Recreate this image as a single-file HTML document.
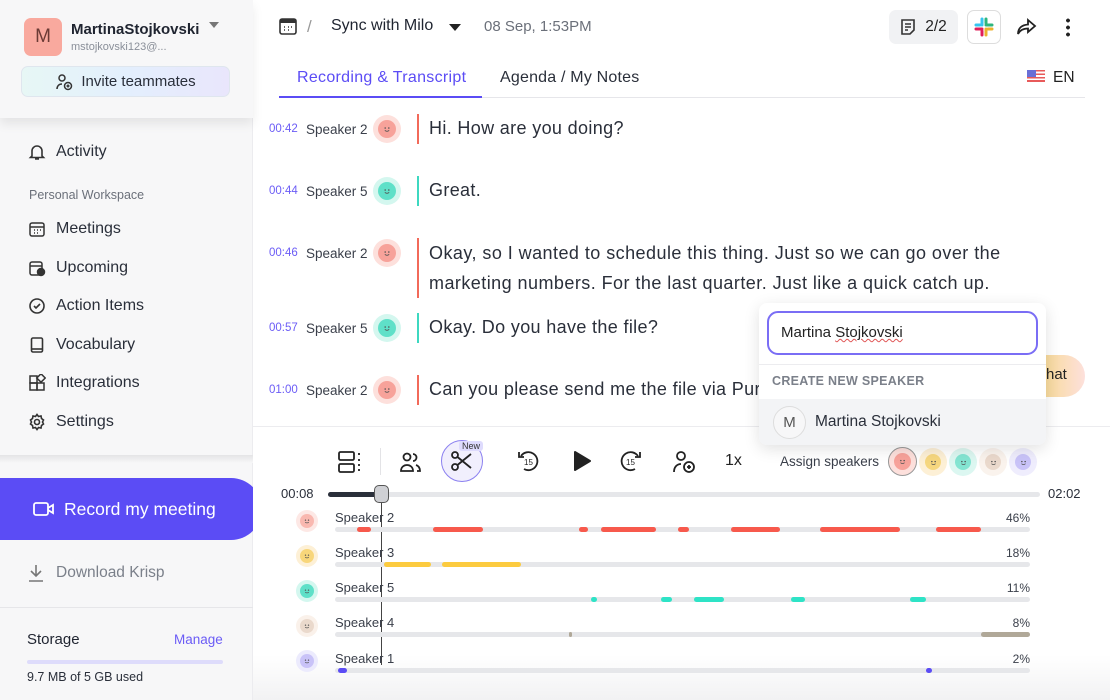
<!DOCTYPE html>
<html><head><meta charset="utf-8"><style>
*{box-sizing:border-box;margin:0;padding:0}
body{width:1110px;height:700px;overflow:hidden;font-family:"Liberation Sans",sans-serif;background:#fff;position:relative;color:#1f2430}
.a{position:absolute}
.side{left:0;top:0;width:253px;height:700px;background:#f7f7f8;border-right:1px solid #ececef}
.nav{position:absolute;left:28px;font-size:16px;color:#2a2f3a;display:flex;align-items:center;gap:10px}
.nav svg{width:18px;height:18px}
.tr{position:absolute;display:flex;align-items:center;height:30px}
.ts{font-size:11.5px;color:#6b5cf6;width:37px}
.sp{font-size:13.5px;color:#3a3f4a;width:67px}
.face{width:28px;height:28px;border-radius:50%;display:flex;align-items:center;justify-content:center}
.face span{width:18px;height:18px;border-radius:50%;display:flex;align-items:center;justify-content:center}
.txt{font-size:18px;color:#2a2f3a;letter-spacing:.35px}
.bar{position:absolute;left:335px;width:695px;height:5px;border-radius:3px;background:#e6e7ea}
.seg{position:absolute;height:5px;border-radius:3px;top:0}
.lab{position:absolute;left:335px;font-size:13px;color:#3a3f4a}
.pct{position:absolute;right:80px;font-size:12px;color:#3a3f4a}
.sf{position:absolute;left:296px;width:22px;height:22px;border-radius:50%;display:flex;align-items:center;justify-content:center}
.vl{position:absolute;left:417px;width:1.5px}
</style></head><body>
<svg width="0" height="0" style="position:absolute"><defs><symbol id="sm" viewBox="0 0 12 12"><circle cx="4.2" cy="5" r=".8" fill="#555"/><circle cx="7.8" cy="5" r=".8" fill="#555"/><path d="M3.8 7.3q2.2 2 4.4 0" fill="none" stroke="#555" stroke-width=".8"/></symbol></defs></svg>
<div class="a side"></div>
<div class="a" style="left:0;top:0;width:253px;height:118px;background:#f7f7f8;box-shadow:0 6px 10px rgba(0,0,0,.08)"></div>
<div class="a" style="left:24px;top:18px;width:38px;height:38px;border-radius:7px;background:#f9a99e;color:#6b3a35;font-size:19px;display:flex;align-items:center;justify-content:center">M</div>
<div class="a" style="left:71px;top:21px;font-size:15px;font-weight:bold;color:#1f2430">MartinaStojkovski</div>
<div class="a" style="left:71px;top:41px;font-size:11px;color:#8a8f99">mstojkovski123@...</div>
<div class="a" style="left:209px;top:22px;width:0;height:0;border-left:5px solid transparent;border-right:5px solid transparent;border-top:6px solid #777"></div>
<div class="a" style="left:21px;top:66px;width:209px;height:31px;border-radius:7px;background:linear-gradient(90deg,#e7f7f5,#e3effd,#e9e6fc);border:1px solid #dfe6ee;display:flex;align-items:center;justify-content:center;gap:8px;font-size:15px;color:#2a2f3a"><svg width="18" height="18" viewBox="0 0 18 18" fill="none" stroke="#333" stroke-width="1.5"><circle cx="7" cy="5" r="3"/><path d="M2 16c0-3 2-5 5-5"/><circle cx="13" cy="13" r="3.5"/><path d="M13 11.5v3M11.5 13h3"/></svg>Invite teammates</div>

<div class="nav" style="top:143px"><svg viewBox="0 0 18 18" fill="none" stroke="#333" stroke-width="1.6"><path d="M4 13V8a5 5 0 0110 0v5l1.5 1.5h-13zM7 16h4"/></svg>Activity</div>
<div class="a" style="left:29px;top:188px;font-size:12.5px;color:#6b707a">Personal Workspace</div>
<div class="nav" style="top:220px"><svg viewBox="0 0 18 18" fill="none" stroke="#333" stroke-width="1.5"><rect x="2" y="3" width="14" height="13" rx="2"/><path d="M2 7h14M6 10h1M9 10h1M12 10h1M6 13h1M9 13h1"/></svg>Meetings</div>
<div class="nav" style="top:259px"><svg viewBox="0 0 18 18" fill="none" stroke="#333" stroke-width="1.5"><rect x="2" y="3" width="12" height="13" rx="2"/><path d="M2 7h12"/><circle cx="13" cy="13" r="3.5" fill="#333"/></svg>Upcoming</div>
<div class="nav" style="top:297px"><svg viewBox="0 0 18 18" fill="none" stroke="#333" stroke-width="1.6"><circle cx="9" cy="9" r="7"/><path d="M6 9l2 2 4-4"/></svg>Action Items</div>
<div class="nav" style="top:336px"><svg viewBox="0 0 18 18" fill="none" stroke="#333" stroke-width="1.6"><rect x="3.5" y="2" width="11" height="14" rx="1.5"/><path d="M3.5 13h11"/></svg>Vocabulary</div>
<div class="nav" style="top:374px"><svg viewBox="0 0 18 18" fill="none" stroke="#333" stroke-width="1.5"><rect x="2" y="9" width="7" height="7"/><rect x="9" y="9" width="7" height="7"/><rect x="2" y="2" width="7" height="7"/><rect x="10" y="1" width="6" height="6" transform="rotate(45 13 4)"/></svg>Integrations</div>
<div class="nav" style="top:413px"><svg viewBox="0 0 18 18" fill="none" stroke="#333" stroke-width="1.6"><circle cx="9" cy="9" r="2.5"/><path d="M9 1.5l1.5 2 2.5-.5.5 2.5 2 1.5-1 2 1 2-2 1.5-.5 2.5-2.5-.5L9 16.5l-1.5-2-2.5.5-.5-2.5-2-1.5 1-2-1-2 2-1.5.5-2.5 2.5.5z"/></svg>Settings</div>
<div class="a" style="left:0;top:455px;width:253px;height:8px;background:linear-gradient(#e4e4e6,#f7f7f8)"></div>
<div class="a" style="left:0;top:478px;width:262px;height:62px;border-radius:0 31px 31px 0;background:#5b4cf5;color:#fff;font-size:17.5px;display:flex;align-items:center;padding-left:33px;gap:9px"><svg width="22" height="16" viewBox="0 0 22 16" fill="none" stroke="#fff" stroke-width="1.8"><rect x="1" y="2" width="14" height="12" rx="2"/><path d="M15 7l5-3v8l-5-3"/></svg>Record my meeting</div>
<div class="a" style="left:28px;top:564px;font-size:15.5px;color:#7b808a;display:flex;gap:12px;align-items:center"><svg width="16" height="18" viewBox="0 0 16 18" fill="none" stroke="#777" stroke-width="1.6"><path d="M8 1v11M3 7l5 5 5-5M1 17h14"/></svg>Download Krisp</div>
<div class="a" style="left:0;top:607px;width:253px;height:1px;background:#e6e6e9"></div>
<div class="a" style="left:27px;top:631px;font-size:15px;color:#1f2430">Storage</div>
<div class="a" style="left:174px;top:632px;font-size:13.5px;color:#6b5cf6">Manage</div>
<div class="a" style="left:27px;top:660px;width:196px;height:4px;border-radius:2px;background:#dedcfb"></div>
<div class="a" style="left:27px;top:670px;font-size:12.5px;color:#2a2f3a">9.7 MB of 5 GB used</div>

<!-- header -->
<svg class="a" style="left:279px;top:18px" width="18" height="17" viewBox="0 0 18 17"><rect x="1" y="1" width="16" height="15" rx="2" fill="none" stroke="#333" stroke-width="1.6"/><rect x="1" y="1" width="16" height="4" fill="#333"/><path d="M5 9h1M9 9h1M12 9h1M5 12h1M9 12h1" stroke="#333" stroke-width="1.6"/></svg>
<div class="a" style="left:307px;top:17px;font-size:17px;color:#999">/</div>
<div class="a" style="left:331px;top:17px;font-size:16px;color:#1f2430">Sync with Milo</div>
<div class="a" style="left:449px;top:24px;border-left:6px solid transparent;border-right:6px solid transparent;border-top:7px solid #222"></div>
<div class="a" style="left:484px;top:18px;font-size:15px;color:#6b707a">08 Sep, 1:53PM</div>
<div class="a" style="left:889px;top:10px;width:69px;height:34px;border-radius:7px;background:#f1f2f4;display:flex;align-items:center;justify-content:center;gap:9px;font-size:15.5px;color:#222"><svg width="16" height="18" viewBox="0 0 16 18" fill="none" stroke="#333" stroke-width="1.6"><path d="M2 2h12v10l-4 4H2z M5 6h6M5 9h6M5 12h3"/></svg>2/2</div>
<div class="a" style="left:967px;top:10px;width:34px;height:34px;border-radius:7px;border:1px solid #ddd;background:#fff"></div>
<svg class="a" style="left:974px;top:17px" width="20" height="20" viewBox="0 0 20 20" stroke-linecap="round" stroke-width="3"><path d="M8 2v6" stroke="#36c5f0"/><path d="M18 8h-6" stroke="#2eb67d"/><path d="M12 18v-6" stroke="#ecb22e"/><path d="M2 12h6" stroke="#e01e5a"/><path d="M12 2v4" stroke="#2eb67d"/><path d="M18 12h-4" stroke="#ecb22e"/><path d="M8 18v-4" stroke="#e01e5a"/><path d="M2 8h4" stroke="#36c5f0"/></svg>
<svg class="a" style="left:1016px;top:18px" width="21" height="18" viewBox="0 0 21 18" fill="none" stroke="#222" stroke-width="1.8"><path d="M12 2l7 6-7 6v-3.5C7 10.5 4 12 2 16c0-6 4-9 10-9.5z"/></svg>
<div class="a" style="left:1066px;top:17px;width:4px;height:20px;background:radial-gradient(circle,#222 1.8px,transparent 2px) 0 0/4px 7px"></div>
<div class="a" style="left:297px;top:69px;font-size:16px;letter-spacing:.3px;color:#5b4cf5">Recording &amp; Transcript</div>
<div class="a" style="left:500px;top:69px;font-size:16px;letter-spacing:.2px;color:#2a2f3a">Agenda / My Notes</div>
<div class="a" style="left:1027px;top:70px;width:18px;height:12px;background:repeating-linear-gradient(#e85a5a 0 1.7px,#fff 1.7px 3.4px)"></div>
<div class="a" style="left:1027px;top:70px;width:9px;height:7px;background:#6a6fd6"></div>
<div class="a" style="left:1053px;top:69px;font-size:15.5px;color:#222">EN</div>
<div class="a" style="left:279px;top:97px;width:806px;height:1px;background:#e6e6ea"></div>
<div class="a" style="left:279px;top:96px;width:203px;height:2px;background:#5b4cf5"></div>

<!-- transcript -->
<div class="tr" style="left:269px;top:114px"><span class="ts">00:42</span><span class="sp">Speaker 2</span><span class="face" style="background:#fde0dc"><span style="background:#f7a29a"><svg width="12" height="12"><use href="#sm"/></svg></span></span></div>
<div class="vl" style="top:114px;height:30px;background:#f26a5a"></div>
<div class="a txt" style="left:429px;top:118px">Hi. How are you doing?</div>
<div class="tr" style="left:269px;top:176px"><span class="ts">00:44</span><span class="sp">Speaker 5</span><span class="face" style="background:#d4f7ef"><span style="background:#5fe0c8"><svg width="12" height="12"><use href="#sm"/></svg></span></span></div>
<div class="vl" style="top:176px;height:30px;background:#3dd8c0"></div>
<div class="a txt" style="left:429px;top:180px">Great.</div>
<div class="tr" style="left:269px;top:238px"><span class="ts">00:46</span><span class="sp">Speaker 2</span><span class="face" style="background:#fde0dc"><span style="background:#f7a29a"><svg width="12" height="12"><use href="#sm"/></svg></span></span></div>
<div class="vl" style="top:238px;height:60px;background:#f26a5a"></div>
<div class="a txt" style="left:429px;top:238px;line-height:30px;letter-spacing:.45px">Okay, so I wanted to schedule this thing. Just so we can go over the<br>marketing numbers. For the last quarter. Just like a quick catch up.</div>
<div class="tr" style="left:269px;top:313px"><span class="ts">00:57</span><span class="sp">Speaker 5</span><span class="face" style="background:#d4f7ef"><span style="background:#5fe0c8"><svg width="12" height="12"><use href="#sm"/></svg></span></span></div>
<div class="vl" style="top:313px;height:30px;background:#3dd8c0"></div>
<div class="a txt" style="left:429px;top:317px">Okay. Do you have the file?</div>
<div class="tr" style="left:269px;top:375px"><span class="ts">01:00</span><span class="sp">Speaker 2</span><span class="face" style="background:#fde0dc"><span style="background:#f7a29a"><svg width="12" height="12"><use href="#sm"/></svg></span></span></div>
<div class="vl" style="top:375px;height:30px;background:#f26a5a"></div>
<div class="a txt" style="left:429px;top:379px">Can you please send me the file via Pur</div>
<div class="a" style="left:1025px;top:355px;width:60px;height:42px;border-radius:21px;background:linear-gradient(90deg,#f6d87a,#fde0dc);font-size:15px;color:#222;padding:11px 0 0 21px">hat</div>

<!-- player area -->
<div class="a" style="left:253px;top:426px;width:857px;height:274px;background:#fff;border-top:1px solid #ececef"></div>
<div class="a" style="left:253px;top:655px;width:857px;height:45px;background:linear-gradient(rgba(255,255,255,0),#f2f2f3)"></div>
<svg class="a" style="left:338px;top:451px" width="24" height="22" viewBox="0 0 24 22" fill="none" stroke="#222" stroke-width="1.8"><rect x="1" y="1" width="15" height="8" rx="1.5"/><rect x="1" y="13" width="15" height="8" rx="1.5"/><path d="M21 2v2M21 8v2M21 13v2M21 18v2"/></svg>
<div class="a" style="left:380px;top:448px;width:1px;height:27px;background:#e3e3e6"></div>
<svg class="a" style="left:400px;top:451px" width="22" height="22" viewBox="0 0 22 22" fill="none" stroke="#222" stroke-width="1.8"><circle cx="7" cy="6" r="3.5"/><path d="M1 20c0-4 3-6 6-6s6 2 6 6z"/><path d="M13 3a3.5 3.5 0 010 7M16 14c3 1 4 3 4 6h-3"/></svg>
<div class="a" style="left:441px;top:440px;width:42px;height:42px;border-radius:50%;border:1.5px solid #8b80f0;background:#f1effd"></div>
<svg class="a" style="left:451px;top:451px" width="22" height="20" viewBox="0 0 22 20" fill="none" stroke="#222" stroke-width="1.8"><circle cx="4" cy="4" r="3"/><circle cx="4" cy="16" r="3"/><path d="M6.5 6L20 17M6.5 14L20 3"/></svg>
<div class="a" style="left:459px;top:441px;font-size:9px;background:#dedbfd;color:#333;padding:0 3px;border-radius:3px">New</div>
<svg class="a" style="left:517px;top:450px" width="22" height="22" viewBox="0 0 22 22" fill="none" stroke="#222" stroke-width="1.8"><path d="M4 6a9 9 0 113 13"/><path d="M2 2v5h5"/><text x="7" y="15" font-size="8" fill="#222" stroke="none" font-family="Liberation Sans">15</text></svg>
<svg class="a" style="left:572px;top:451px" width="20" height="20" viewBox="0 0 20 20"><path d="M3 1l15 9-15 9z" fill="#222" stroke="#222" stroke-linejoin="round" stroke-width="2"/></svg>
<svg class="a" style="left:620px;top:450px" width="22" height="22" viewBox="0 0 22 22" fill="none" stroke="#222" stroke-width="1.8"><path d="M18 6a9 9 0 10-3 13"/><path d="M20 2v5h-5"/><text x="6" y="15" font-size="8" fill="#222" stroke="none" font-family="Liberation Sans">15</text></svg>
<svg class="a" style="left:672px;top:450px" width="24" height="24" viewBox="0 0 24 24" fill="none" stroke="#222" stroke-width="1.8"><circle cx="9" cy="6" r="4"/><path d="M2 22c0-5 3-8 7-8"/><circle cx="17" cy="17" r="5"/><path d="M15 17h4M17 15v4"/></svg>
<div class="a" style="left:725px;top:452px;font-size:16px;color:#222">1x</div>
<div class="a" style="left:780px;top:454px;font-size:13.5px;color:#3a3f4a">Assign speakers</div>
<div class="a" style="left:888px;top:447px;width:29px;height:29px;border-radius:50%;border:1.5px solid #999;background:#fde0dc;display:flex;align-items:center;justify-content:center"><span style="width:17px;height:17px;border-radius:50%;background:#f7a29a;display:flex;align-items:center;justify-content:center"><svg width="11" height="11"><use href="#sm"/></svg></span></div>
<div class="a" style="left:919px;top:448px;width:28px;height:28px;border-radius:50%;background:#fdf0d6;display:flex;align-items:center;justify-content:center"><span style="width:16px;height:16px;border-radius:50%;background:#f6d77f;display:flex;align-items:center;justify-content:center"><svg width="11" height="11"><use href="#sm"/></svg></span></div>
<div class="a" style="left:949px;top:448px;width:28px;height:28px;border-radius:50%;background:#dcf7f1;display:flex;align-items:center;justify-content:center"><span style="width:16px;height:16px;border-radius:50%;background:#84e5d2;display:flex;align-items:center;justify-content:center"><svg width="11" height="11"><use href="#sm"/></svg></span></div>
<div class="a" style="left:979px;top:448px;width:28px;height:28px;border-radius:50%;background:#faf3ed;display:flex;align-items:center;justify-content:center"><span style="width:16px;height:16px;border-radius:50%;background:#ead9cc;display:flex;align-items:center;justify-content:center"><svg width="11" height="11"><use href="#sm"/></svg></span></div>
<div class="a" style="left:1009px;top:448px;width:28px;height:28px;border-radius:50%;background:#efedfd;display:flex;align-items:center;justify-content:center"><span style="width:16px;height:16px;border-radius:50%;background:#c9c3f8;display:flex;align-items:center;justify-content:center"><svg width="11" height="11"><use href="#sm"/></svg></span></div>

<div class="a" style="left:281px;top:486px;font-size:13px;color:#2a2f3a">00:08</div>
<div class="a" style="left:1048px;top:486px;font-size:13px;color:#2a2f3a">02:02</div>
<div class="a" style="left:328px;top:492px;width:712px;height:5px;border-radius:3px;background:#e6e7ea"></div>
<div class="a" style="left:328px;top:492px;width:53px;height:5px;border-radius:3px;background:#2a2f3a"></div>
<div class="a" style="left:374px;top:485px;width:15px;height:18px;border-radius:5px;background:#cfd0d4;border:1.5px solid #555"></div>
<div class="a" style="left:381px;top:503px;width:1px;height:162px;background:#444"></div>

<div class="sf" style="top:510px;background:#fde8e5"><span style="width:14px;height:14px;border-radius:50%;background:#f9b8b0;display:flex;align-items:center;justify-content:center"><svg width="10" height="10"><use href="#sm"/></svg></span></div><div class="lab" style="top:510px">Speaker 2</div><div class="pct" style="top:511px">46%</div>
<div class="bar" style="top:527px"><div class="seg" style="left:22px;width:14px;background:#f7594c"></div><div class="seg" style="left:98px;width:50px;background:#f7594c"></div><div class="seg" style="left:244px;width:9px;background:#f7594c"></div><div class="seg" style="left:266px;width:55px;background:#f7594c"></div><div class="seg" style="left:343px;width:11px;background:#f7594c"></div><div class="seg" style="left:396px;width:49px;background:#f7594c"></div><div class="seg" style="left:485px;width:80px;background:#f7594c"></div><div class="seg" style="left:601px;width:45px;background:#f7594c"></div></div>
<div class="sf" style="top:545px;background:#fdf0d6"><span style="width:14px;height:14px;border-radius:50%;background:#f8d67a;display:flex;align-items:center;justify-content:center"><svg width="10" height="10"><use href="#sm"/></svg></span></div><div class="lab" style="top:545px">Speaker 3</div><div class="pct" style="top:546px">18%</div>
<div class="bar" style="top:562px"><div class="seg" style="left:49px;width:47px;background:#fccb3f"></div><div class="seg" style="left:107px;width:79px;background:#fccb3f"></div></div>
<div class="sf" style="top:580px;background:#d4f7ef"><span style="width:14px;height:14px;border-radius:50%;background:#5fe0c8;display:flex;align-items:center;justify-content:center"><svg width="10" height="10"><use href="#sm"/></svg></span></div><div class="lab" style="top:580px">Speaker 5</div><div class="pct" style="top:581px">11%</div>
<div class="bar" style="top:597px"><div class="seg" style="left:256px;width:6px;background:#2ee3c6"></div><div class="seg" style="left:326px;width:11px;background:#2ee3c6"></div><div class="seg" style="left:359px;width:30px;background:#2ee3c6"></div><div class="seg" style="left:456px;width:14px;background:#2ee3c6"></div><div class="seg" style="left:575px;width:16px;background:#2ee3c6"></div></div>
<div class="sf" style="top:615px;background:#faf1ea"><span style="width:14px;height:14px;border-radius:50%;background:#ead9cc;display:flex;align-items:center;justify-content:center"><svg width="10" height="10"><use href="#sm"/></svg></span></div><div class="lab" style="top:615px">Speaker 4</div><div class="pct" style="top:616px">8%</div>
<div class="bar" style="top:632px"><div class="seg" style="left:234px;width:3px;background:#b0a898"></div><div class="seg" style="left:646px;width:49px;background:#b0a898"></div></div>
<div class="sf" style="top:650px;background:#ecebfd"><span style="width:14px;height:14px;border-radius:50%;background:#c9c3f8;display:flex;align-items:center;justify-content:center"><svg width="10" height="10"><use href="#sm"/></svg></span></div><div class="lab" style="top:651px">Speaker 1</div><div class="pct" style="top:652px">2%</div>
<div class="bar" style="top:668px"><div class="seg" style="left:3px;width:9px;background:#5b4cf5"></div><div class="seg" style="left:591px;width:6px;background:#5b4cf5"></div></div>

<!-- popup -->
<div class="a" style="left:759px;top:303px;width:287px;height:142px;border-radius:8px;background:#fff;box-shadow:0 4px 16px rgba(0,0,0,.12);overflow:hidden">
<div class="a" style="left:8px;top:8px;width:271px;height:44px;border:2.5px solid #7a6df5;border-radius:11px;font-size:15px;color:#222;padding:11px 12px">Martina <span style="text-decoration:underline wavy #e05555;text-decoration-thickness:1px">Stojkovski</span></div>
<div class="a" style="left:0;top:61px;width:287px;height:1px;background:#ececef"></div>
<div class="a" style="left:13px;top:71px;font-size:12.5px;font-weight:bold;color:#7b808a;letter-spacing:.3px">CREATE NEW SPEAKER</div>
<div class="a" style="left:0;top:96px;width:287px;height:46px;background:#f3f4f6"></div>
<div class="a" style="left:14px;top:103px;width:33px;height:33px;border-radius:50%;border:1px solid #ddd;background:#f7f7f8;font-size:15px;color:#555;display:flex;align-items:center;justify-content:center">M</div>
<div class="a" style="left:56px;top:110px;font-size:15.5px;color:#2a2f3a">Martina Stojkovski</div>
</div>
</body></html>
